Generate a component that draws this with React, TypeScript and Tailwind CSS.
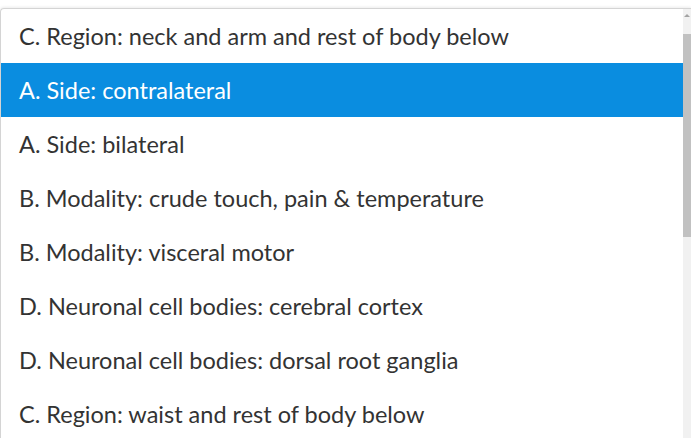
import React from "react";

const OPTIONS = [
  "C. Region: neck and arm and rest of body below",
  "A. Side: contralateral",
  "A. Side: bilateral",
  "B. Modality: crude touch, pain & temperature",
  "B. Modality: visceral motor",
  "D. Neuronal cell bodies: cerebral cortex",
  "D. Neuronal cell bodies: dorsal root ganglia",
  "C. Region: waist and rest of body below",
];

export default function App() {
  return (
    <div className="h-[438px] w-[691px] overflow-hidden bg-white pt-[8px] font-['Lato',sans-serif]">
      <div className="flex h-[460px] rounded-tl-[4px] border-l border-t border-[#d4d4d4] shadow-[0_-1px_3px_rgba(0,0,0,0.08)]">
        {/* options */}
        <ul className="flex-1">
          {OPTIONS.map((o, i) => (
            <li
              key={i}
              className={`flex h-[54px] items-center pl-[18px] pt-[2px] text-[23.5px] ${
                i === 1 ? "bg-[#0a8de0] text-white" : "text-[#333]"
              }`}
            >
              {o}
            </li>
          ))}
        </ul>

        {/* scrollbar */}
        <div className="flex w-[8px] flex-col bg-[#f1f1f1]">
          <div className="flex h-[25px] items-start justify-center pt-[4px]">
            <svg width="6" height="4" viewBox="0 0 6 4">
              <path d="M0 4 L3 1 L6 4 Z" fill="#a3a3a3" />
            </svg>
          </div>
          <div className="h-[203px] bg-[#c1c1c1]" />
        </div>
      </div>
    </div>
  );
}
